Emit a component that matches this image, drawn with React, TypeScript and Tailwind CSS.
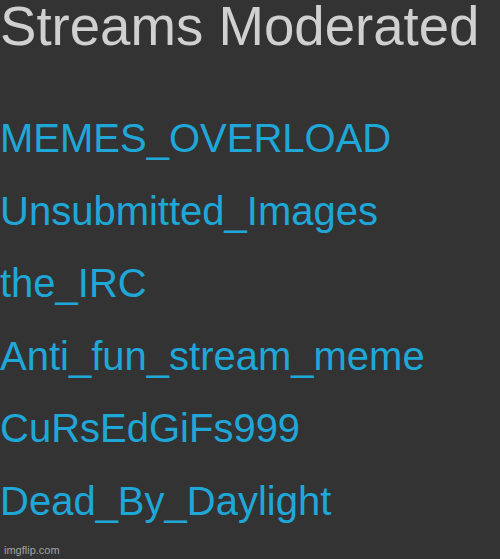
import React from 'react';

const streams = [
  'MEMES_OVERLOAD',
  'Unsubmitted_Images',
  'the_IRC',
  'Anti_fun_stream_meme',
  'CuRsEdGiFs999',
  'Dead_By_Daylight',
];

export default function App() {
  return (
    <div className="relative w-[500px] h-[559px] overflow-hidden bg-[#333333] font-['Liberation_Sans',Arial,sans-serif]">
      {/* header */}
      <h1 className="text-[54.6px] leading-[54px] font-normal text-[#d0d0d0] whitespace-nowrap">Streams Moderated</h1>

      {/* moderated stream links */}
      <ul className="mt-[48px] flex flex-col">
        {streams.map((name) => (
          <li key={name} className="text-[40px] leading-[72.6px] text-[#1fa7d8] whitespace-nowrap">
            {name}
          </li>
        ))}
      </ul>

      <span className="absolute left-[4px] bottom-[3px] text-[11px] leading-[11px] text-[#a3a3a3]">imgflip.com</span>
    </div>
  );
}
